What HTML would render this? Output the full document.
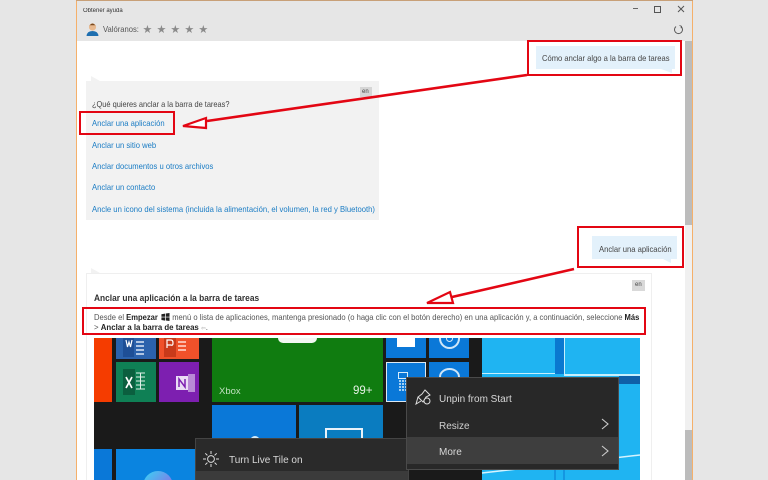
<!DOCTYPE html>
<html><head><meta charset="utf-8"><style>
html,body{margin:0;padding:0;width:768px;height:480px;overflow:hidden;background:#e6e6e6}
body{position:relative;font-family:"Liberation Sans",sans-serif}
.a{position:absolute}
.t{position:absolute;white-space:nowrap;font-size:8.3px;line-height:11px;color:#444;transform-origin:0 50%}
.l{color:#1a7cc4}
.s{transform:scaleX(.92)}
.b{position:absolute;border:2px solid #e30613;box-sizing:border-box}
.w{filter:blur(.35px)}
</style></head><body>
<div class="a" style="left:76px;top:0;width:617px;height:480px;background:#fff;border-left:1px solid #f5b06a;border-right:1px solid #f5b06a;box-sizing:border-box"></div>
<div class="a" style="left:76px;top:0;width:617px;height:1px;background:#c8a078"></div>
<div class="a" style="left:77px;top:1px;width:615px;height:40px;background:#e6e6e6"></div>
<div class="t w" style="left:83px;top:6px;font-size:6px;color:#333">Obtener ayuda</div>
<svg class="a w" style="left:86px;top:22px" width="13" height="15"><circle cx="6.5" cy="5" r="3.6" fill="#e8b98f"/><path d="M2.9 4.5Q6.5-1.5 10.1 4.5L9 3.2H4Z" fill="#7a4a20"/><path d="M.5 14Q1 9 6.5 9T12.5 14Z" fill="#1f6fb0"/></svg>
<div class="t w s" style="left:103px;top:24px;font-size:8.3px;color:#555">Valóranos:</div>
<div class="t w" style="left:142.5px;top:23px;font-size:11px;line-height:14px;color:#8a8a8a;letter-spacing:4.1px">★★★★★</div>
<div class="a" style="left:633px;top:8px;width:5px;height:1px;background:#666"></div>
<div class="a" style="left:654px;top:6px;width:5px;height:5px;border:1px solid #555"></div>
<svg class="a" style="left:677px;top:5px" width="8" height="8"><path d="M1 1L7 7M7 1L1 7" stroke="#555" stroke-width="1"/></svg>
<svg class="a" style="left:673px;top:24px" width="11" height="11"><path d="M3 2.5A4 4 0 1 0 8 2.5" fill="none" stroke="#555" stroke-width="1"/><path d="M6.5 1.5L8.5 2.2 8 4.2" fill="none" stroke="#555" stroke-width=".8"/></svg>
<div class="a" style="left:685px;top:41px;width:7px;height:439px;background:#f0f0f0"></div>
<div class="a" style="left:685px;top:41px;width:7px;height:184px;background:#bcbcbc"></div>
<div class="a" style="left:685px;top:430px;width:7px;height:50px;background:#bcbcbc"></div>

<div class="a" style="left:536px;top:46px;width:139px;height:23px;background:#e3f1fb"></div>
<div class="a" style="left:661px;top:69px;width:0;height:0;border-left:11px solid transparent;border-top:4px solid #e3f1fb"></div>
<div class="t w" style="left:542px;top:53px;font-size:8.4px;transform:scaleX(.907)">Cómo anclar algo a la barra de tareas</div>

<div class="a" style="left:86px;top:81px;width:293px;height:139px;background:#f2f2f2"></div>
<div class="a" style="left:91px;top:76px;width:0;height:0;border-right:9px solid transparent;border-bottom:5px solid #f2f2f2"></div>
<div class="a" style="left:360px;top:87px;width:12px;height:10px;background:#d6d6d6"></div>
<div class="t w" style="left:362px;top:87px;font-size:6px;color:#444">en</div>
<div class="t w" style="left:92px;top:99px;font-size:8.4px;transform:scaleX(.884)">¿Qué quieres anclar a la barra de tareas?</div>
<div class="t l w s" style="left:92px;top:118px">Anclar una aplicación</div>
<div class="t l w s" style="left:92px;top:140px">Anclar un sitio web</div>
<div class="t l w s" style="left:92px;top:161px">Anclar documentos u otros archivos</div>
<div class="t l w s" style="left:92px;top:182px">Anclar un contacto</div>
<div class="t l w s" style="left:92px;top:204px;transform:scaleX(.924)">Ancle un icono del sistema (incluida la alimentación, el volumen, la red y Bluetooth)</div>

<div class="a" style="left:592px;top:236px;width:85px;height:23px;background:#e3f1fb"></div>
<div class="a" style="left:663px;top:259px;width:0;height:0;border-left:8px solid transparent;border-top:4px solid #e3f1fb"></div>
<div class="t w s" style="left:599px;top:244px">Anclar una aplicación</div>

<div class="a" style="left:86px;top:273px;width:566px;height:207px;border:1px solid #efefef;border-bottom:0;box-sizing:border-box"></div>
<div class="a" style="left:91px;top:268px;width:0;height:0;border-right:9px solid transparent;border-bottom:5px solid #f2f2f2"></div>
<div class="a" style="left:632px;top:280px;width:13px;height:11px;background:#d9d9d9"></div>
<div class="t w" style="left:635px;top:280px;font-size:6px;color:#444">en</div>
<div class="t w" style="left:94px;top:293px;font-size:9px;font-weight:bold;color:#333;transform:scaleX(.93)">Anclar una aplicación a la barra de tareas</div>
<div class="t w" style="left:94px;top:312px;font-size:8.25px;color:#555;transform:scaleX(.922)">Desde el <b style="color:#222">Empezar</b> <svg width="9" height="8" style="vertical-align:-.5px;margin:0 1px"><path d="M0 1.2L4 .6V3.8H0ZM4.8 .5L9 0V3.8H4.8ZM0 4.4H4V7.6L0 7ZM4.8 4.4H9V8L4.8 7.5Z" fill="#222"/></svg> menú o lista de aplicaciones, mantenga presionado (o haga clic con el botón derecho) en una aplicación y, a continuación, seleccione <b style="color:#222">Más</b></div>
<div class="t w" style="left:94px;top:322px;font-size:8.25px;color:#555;transform:scaleX(.95)">&gt; <b style="color:#222">Anclar a la barra de tareas</b> <span style="color:#aaa;font-size:6px">⇦</span>.</div>

<div class="a w" style="left:94px;top:338px;width:546px;height:142px;overflow:hidden;background:#1a1a1a">
 <div class="a" style="left:388px;top:0;width:158px;height:142px;background:#1fb4f2"></div>
 <div class="a" style="left:461px;top:0;width:9px;height:36px;background:#0a78d0"></div>
 <div class="a" style="left:388px;top:35px;width:73px;height:1px;background:#c6effd"></div>
 <div class="a" style="left:470px;top:0;width:1px;height:36px;background:#c6effd"></div>
 <div class="a" style="left:470px;top:36px;width:76px;height:2px;background:#c6effd"></div>
 <div class="a" style="left:525px;top:38px;width:21px;height:8px;background:#0f5fa8"></div>
 <svg class="a" style="left:315px;top:110px" width="231" height="32"><path d="M73 25L231 7" stroke="#d6f3fe" stroke-width="1.5"/><path d="M146 18V32M155 18V32" stroke="#0a78d0" stroke-width="1"/></svg>
 <div class="a" style="left:0;top:0;width:18px;height:64px;background:#f53c00"></div>
 <div class="a" style="left:22px;top:0;width:40px;height:21px;background:#2b62ac"></div>
 <div class="a" style="left:65px;top:0;width:40px;height:21px;background:#f0512a"></div>
 <div class="a" style="left:22px;top:24px;width:40px;height:40px;background:#0f8055"></div>
 <div class="a" style="left:65px;top:24px;width:40px;height:40px;background:#7d1fb0"></div>
 <svg class="a" style="left:22px;top:0" width="84" height="64">
  <rect x="7" y="0" width="11" height="19" fill="#1e4f96"/><path d="M10 2L11.5 9 13 4 14.5 9 16 2" fill="none" stroke="#fff" stroke-width="1.2"/>
  <path d="M20 4H28M20 8H28M20 12H28M20 16H28" stroke="#dbe6f5" stroke-width="1.4"/>
  <rect x="48" y="0" width="12" height="19" fill="#c93a1a"/><path d="M51 10V2H55Q57 2 57 5T55 7H51" fill="none" stroke="#fff" stroke-width="1.2"/>
  <path d="M62 4H70M62 8H70M62 12H70" stroke="#ffdcd2" stroke-width="1.4"/>
  <rect x="7" y="31" width="12" height="26" fill="#0b5f3f"/><path d="M10 39L16 50M16 39L10 50" stroke="#fff" stroke-width="1.7"/>
  <path d="M20 35H29M20 39H29M20 43H29M20 47H29M20 51H29M24.5 35V51" stroke="#dff0e8" stroke-width="1"/>
  <rect x="60" y="38" width="12" height="14" fill="#eadcf5"/><path d="M63 49V41L69 49V41" fill="none" stroke="#7d1fb0" stroke-width="1.5"/>
  <path d="M72 36H79V54H72" fill="#b98ad6"/>
 </svg>
 <div class="a" style="left:118px;top:0;width:171px;height:64px;background:#107c10"></div>
 <div class="a" style="left:184px;top:0;width:39px;height:5px;background:#f2f7f2;border-radius:0 0 20px 20px"></div>
 <div class="t" style="left:125px;top:48px;font-size:9.5px;color:#bfe0bf">Xbox</div>
 <div class="t" style="left:259px;top:48px;font-size:11.5px;color:#e6f2e6">99+</div>
 <div class="a" style="left:118px;top:67px;width:84px;height:40px;background:#0a78d8"></div>
 <div class="a" style="left:205px;top:67px;width:84px;height:40px;background:#0a7cc0"></div>
 <div class="a" style="left:0;top:111px;width:18px;height:31px;background:#0a78d8"></div>
 <div class="a" style="left:22px;top:111px;width:79px;height:31px;background:#0a84e0"></div>
 <div class="a" style="left:49px;top:133px;width:30px;height:30px;border-radius:50%;background:linear-gradient(135deg,#35d6f5,#a64fe0)"></div>
 <div class="a" style="left:156px;top:98px;width:10px;height:10px;background:#d6ecfa;border-radius:5px 5px 0 0"></div>
 <div class="a" style="left:292px;top:0;width:40px;height:20px;background:#0a78d8"></div>
 <div class="a" style="left:335px;top:0;width:40px;height:20px;background:#0a78d8"></div>
 <div class="a" style="left:292px;top:24px;width:40px;height:40px;background:#0a78d8;border:1px solid #dce8f2;box-sizing:border-box"></div>
 <div class="a" style="left:335px;top:24px;width:40px;height:40px;background:#0a78d8"></div>
 <div class="a" style="left:303px;top:0;width:18px;height:9px;background:#fff"></div>
 <div class="a" style="left:345px;top:0;width:21px;height:11px;border:2px solid #cfe6f8;border-top:0;border-radius:0 0 11px 11px;box-sizing:border-box"></div>
 <div class="a" style="left:352px;top:0;width:7px;height:4px;border:1px solid #cfe6f8;border-top:0;border-radius:0 0 4px 4px;box-sizing:border-box"></div>
 <div class="a" style="left:345px;top:30px;width:21px;height:18px;border:2px solid #cfe6f8;border-radius:50%;box-sizing:border-box"></div>
 <svg class="a" style="left:304px;top:34px" width="13" height="20"><rect x=".5" y=".5" width="9" height="6" fill="none" stroke="#d6ecfa"/><path d="M1 9H10M1 12H10M1 15H10M1 18H10" stroke="#d6ecfa" stroke-width="1.6" stroke-dasharray="2 1"/></svg>
 <div class="a" style="left:231px;top:90px;width:38px;height:12px;border:2px solid #e8f2fa;border-bottom:0;box-sizing:border-box"></div>
 <div class="a" style="left:101px;top:100px;width:214px;height:42px;background:#2a2a2a;border:1px solid #444;box-sizing:border-box"></div>
 <div class="a" style="left:102px;top:133px;width:212px;height:9px;background:#3b3b3b"></div>
 <svg class="a" style="left:109px;top:113px" width="16" height="16"><circle cx="8" cy="8" r="3.4" fill="none" stroke="#ddd"/><path d="M8 0V3M8 13V16M0 8H3M13 8H16M2.3 2.3L4.4 4.4M11.6 11.6L13.7 13.7M13.7 2.3L11.6 4.4M4.4 11.6L2.3 13.7" stroke="#ddd"/></svg>
 <div class="t" style="left:135px;top:116px;font-size:10px;line-height:13px;color:#d8d8d8">Turn Live Tile on</div>
 <div class="a" style="left:312px;top:39px;width:213px;height:93px;background:#282828;border:1px solid #4a4a4a;box-sizing:border-box"></div>
 <div class="a" style="left:313px;top:99px;width:211px;height:27px;background:#3e3e3e"></div>
 <svg class="a" style="left:321px;top:50px" width="17" height="18"><path d="M10 2L15 7 11 9 8 14 3 9 7 6ZM3 9L1 16 6 13" fill="none" stroke="#ddd"/><circle cx="12" cy="13" r="3" fill="#282828" stroke="#ddd"/></svg>
 <div class="t" style="left:345px;top:55px;font-size:10px;line-height:13px;color:#d8d8d8">Unpin from Start</div>
 <div class="t" style="left:345px;top:82px;font-size:10px;line-height:13px;color:#d0d0d0">Resize</div>
 <div class="t" style="left:345px;top:108px;font-size:10px;line-height:13px;color:#d8d8d8">More</div>
 <svg class="a" style="left:507px;top:80px" width="8" height="40"><path d="M1 1L7 6 1 11M1 28L7 33 1 38" fill="none" stroke="#ccc" stroke-width="1.1"/></svg>
</div>

<div class="b" style="left:527px;top:40px;width:155px;height:36px"></div>
<div class="b" style="left:79px;top:111px;width:96px;height:24px"></div>
<div class="b" style="left:577px;top:226px;width:107px;height:42px"></div>
<div class="b" style="left:82px;top:307px;width:564px;height:28px"></div>
<svg class="a" style="left:0;top:0" width="768" height="480">
 <path d="M527 75L207 121" stroke="#e30613" stroke-width="2.6" fill="none"/>
 <path d="M183 126L206 118 206 128Z" fill="#fff" stroke="#e30613" stroke-width="2.2"/>
 <path d="M574 269L452 297" stroke="#e30613" stroke-width="2.6" fill="none"/>
 <path d="M427 303L450 292 453 303Z" fill="#fff" stroke="#e30613" stroke-width="2.2"/>
</svg>
</body></html>
